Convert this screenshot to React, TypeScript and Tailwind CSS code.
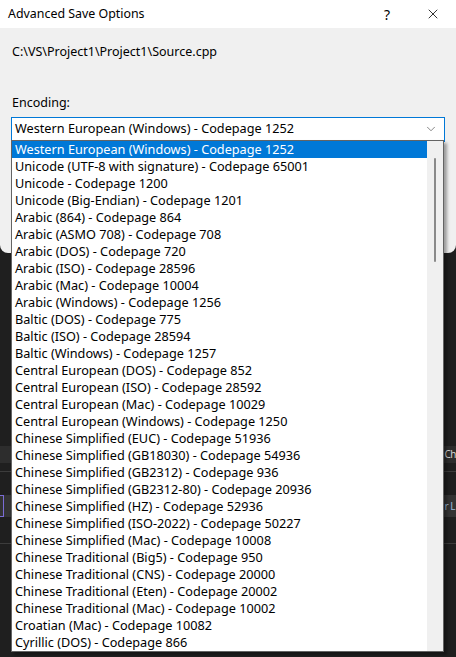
import { X, ChevronDown } from "lucide-react";

const encodings = [
  "Western European (Windows) - Codepage 1252",
  "Unicode (UTF-8 with signature) - Codepage 65001",
  "Unicode - Codepage 1200",
  "Unicode (Big-Endian) - Codepage 1201",
  "Arabic (864) - Codepage 864",
  "Arabic (ASMO 708) - Codepage 708",
  "Arabic (DOS) - Codepage 720",
  "Arabic (ISO) - Codepage 28596",
  "Arabic (Mac) - Codepage 10004",
  "Arabic (Windows) - Codepage 1256",
  "Baltic (DOS) - Codepage 775",
  "Baltic (ISO) - Codepage 28594",
  "Baltic (Windows) - Codepage 1257",
  "Central European (DOS) - Codepage 852",
  "Central European (ISO) - Codepage 28592",
  "Central European (Mac) - Codepage 10029",
  "Central European (Windows) - Codepage 1250",
  "Chinese Simplified (EUC) - Codepage 51936",
  "Chinese Simplified (GB18030) - Codepage 54936",
  "Chinese Simplified (GB2312) - Codepage 936",
  "Chinese Simplified (GB2312-80) - Codepage 20936",
  "Chinese Simplified (HZ) - Codepage 52936",
  "Chinese Simplified (ISO-2022) - Codepage 50227",
  "Chinese Simplified (Mac) - Codepage 10008",
  "Chinese Traditional (Big5) - Codepage 950",
  "Chinese Traditional (CNS) - Codepage 20000",
  "Chinese Traditional (Eten) - Codepage 20002",
  "Chinese Traditional (Mac) - Codepage 10002",
  "Croatian (Mac) - Codepage 10082",
  "Cyrillic (DOS) - Codepage 866",
];

const font = "font-['Noto_Sans',sans-serif]";

export default function App() {
  const selected = encodings[0];

  return (
    <div className={`relative w-[456px] h-[657px] overflow-hidden bg-[#1f1f1f] text-[12.7px] ${font}`}>
      {/* Editor behind the dialog */}
      <div className="flex flex-col pt-[446px]">
        <div className="h-[17px] bg-[#2d2d2d] flex items-center justify-end text-[#d4d4d4] text-[10px] tracking-[-0.5px]">
          <span>Ch</span>
        </div>
        <div className="h-[8px]" />
        <div className="h-px bg-[#3c3c3c]" />
        <div className="h-[23px]" />
        <div className="h-[22px] bg-[#333333] flex items-center justify-between">
          <div className="w-[4px] h-full border border-[#7a6cd6] border-l-0" />
          <span className="text-[#9cb8d8] text-[10px] tracking-[-0.5px] pr-px">r L</span>
        </div>
        <div className="h-[26px]" />
        <div className="h-px bg-[#3c3c3c]" />
      </div>

      {/* Dialog */}
      <div className="absolute top-0 left-0 w-[456px] h-[253px] bg-[#f0f0f0] rounded-b-[8px] flex flex-col">
        <div className="h-[28px] bg-white flex items-center pl-[8px] text-[12.4px] text-black">
          <span className="flex-1">Advanced Save Options</span>
          <span className="w-[46px] text-center text-[14px]">?</span>
          <span className="w-[46px] flex justify-center">
            <X className="w-[16px] h-[16px]" strokeWidth={1.2} />
          </span>
        </div>
        <div className="pl-[12px] pt-[15px] text-black text-[12.5px]">C:\VS\Project1\Project1\Source.cpp</div>
        <div className="pl-[12px] pt-[32px] text-black text-[12.5px]">Encoding:</div>
        <div className="mx-[11px] mt-[4px] h-[25px] bg-white border border-[#0078d7] flex items-center pl-[3px] pr-[6px] text-black">
          <span className="flex-1">{selected}</span>
          <ChevronDown className="w-[14px] h-[14px] text-[#555]" strokeWidth={1.2} />
        </div>
      </div>

      {/* Open dropdown list */}
      <div className="absolute top-[140px] left-[11px] w-[433px] h-[512px] bg-white border border-[#646464] shadow-[3px_3px_3px_rgba(0,0,0,0.35)] flex">
        <ul className="flex-1 flex flex-col">
          {encodings.map((e) => (
            <li
              key={e}
              className={`h-[17px] leading-[17px] pl-[3px] whitespace-nowrap ${
                e === selected ? "bg-[#0078d7] text-white" : "text-black"
              }`}
            >
              {e}
            </li>
          ))}
        </ul>
        <div className="w-[16px] bg-[#f0f0f0] flex justify-center pt-[17px]">
          <div className="w-[2px] h-[104px] bg-[#8a8a8a] rounded-full" />
        </div>
      </div>
    </div>
  );
}
